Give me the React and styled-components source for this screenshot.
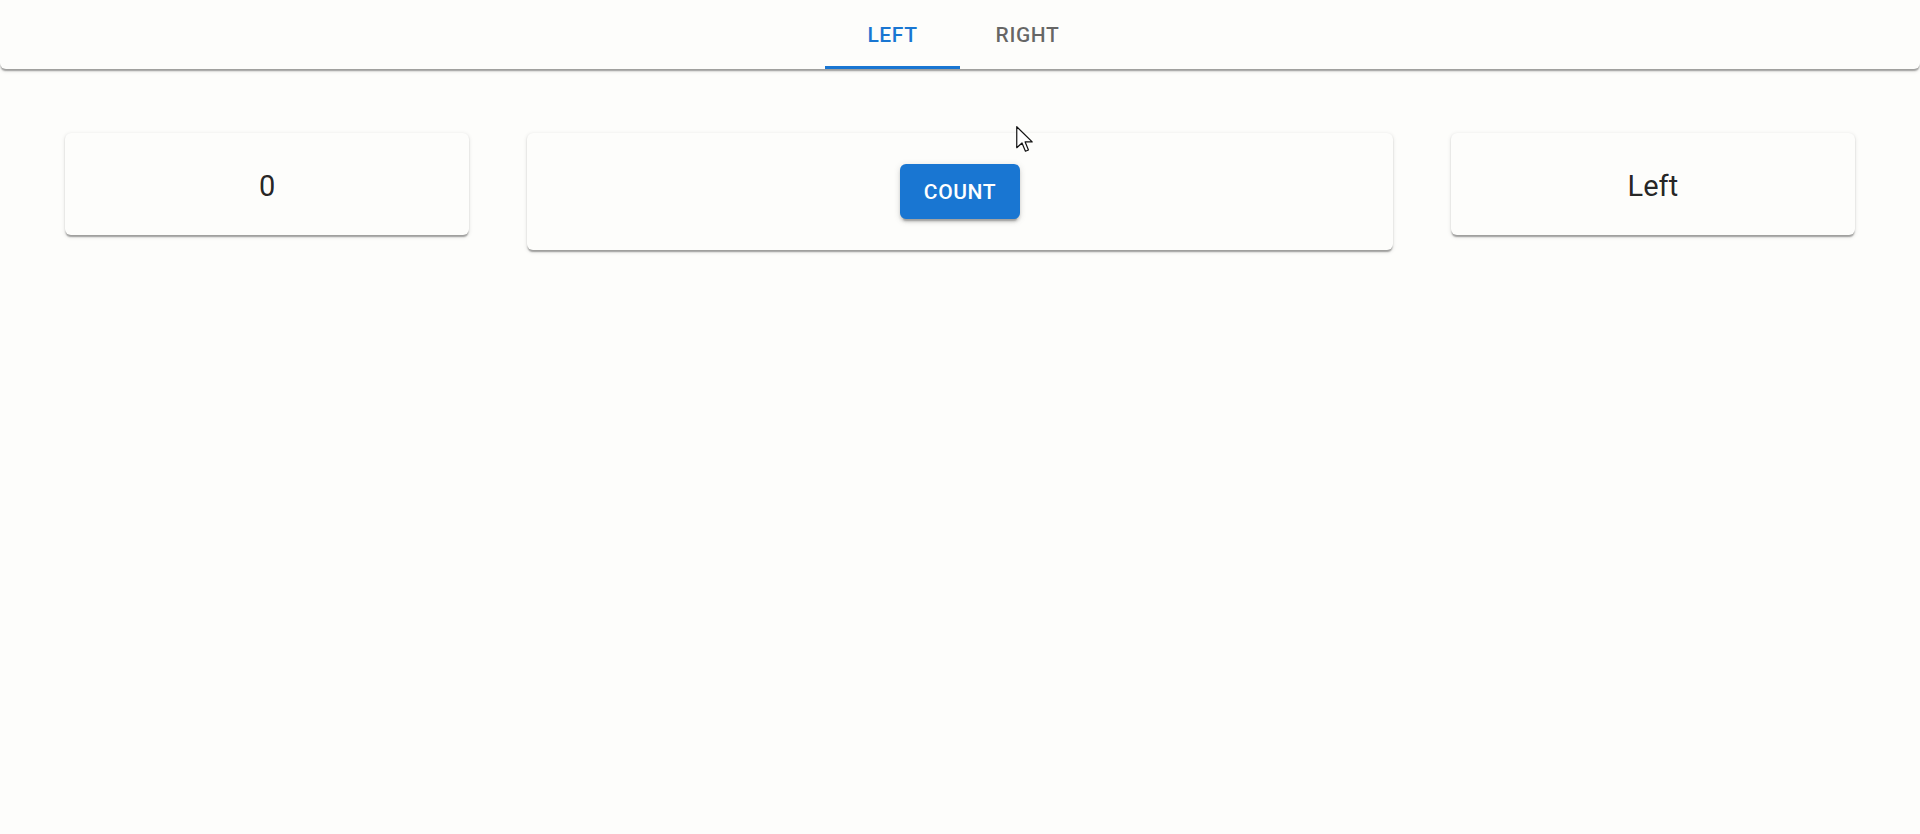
import React, { useState } from "react";
import styled, { createGlobalStyle } from "styled-components";

const GlobalStyle = createGlobalStyle`
  body {
    margin: 0;
    background: #fdfdfb;
    font-family: Roboto, "Liberation Sans", Arial, sans-serif;
    color: rgba(0, 0, 0, 0.87);
  }
`;

const Page = styled.div`
  position: relative;
  min-height: 834px;
`;

const AppBar = styled.header`
  height: 69px;
  display: flex;
  justify-content: center;
  background: #fdfdfb;
  border-radius: 0 0 6px 6px;
  box-shadow: 0 3px 1.5px -1.5px rgba(0, 0, 0, 0.2),
    0 1.5px 1.5px 0 rgba(0, 0, 0, 0.14), 0 1.5px 4.5px 0 rgba(0, 0, 0, 0.12);
`;

const Tab = styled.button`
  min-width: 135px;
  height: 69px;
  padding: 0 24px;
  border: none;
  background: transparent;
  font-family: Roboto, "Liberation Sans", Arial, sans-serif;
  font-size: 21px;
  font-weight: 500;
  letter-spacing: 0.6px;
  text-transform: uppercase;
  cursor: pointer;
  color: ${props => (props.active ? "#1976d2" : "rgba(0, 0, 0, 0.6)")};
  box-shadow: ${props => (props.active ? "inset 0 -3px 0 #1976d2" : "none")};
`;

const Content = styled.main`
  display: grid;
  grid-template-columns: 404fr 865fr 404fr;
  gap: 58px;
  align-items: start;
  padding: 64px 65px 0;
`;

const Card = styled.div`
  background: #fdfdfb;
  border-radius: 6px;
  padding: ${props => props.pad || "26px 24px 22px"};
  display: flex;
  justify-content: center;
  align-items: center;
  box-shadow: 0 3px 1.5px -1.5px rgba(0, 0, 0, 0.2),
    0 1.5px 1.5px 0 rgba(0, 0, 0, 0.14), 0 1.5px 4.5px 0 rgba(0, 0, 0, 0.12);
`;

const Value = styled.div`
  font-size: 29px;
  line-height: 54px;
  font-weight: 400;
  color: rgba(0, 0, 0, 0.87);
`;

const CountButton = styled.button`
  height: 55px;
  min-width: 120px;
  padding: 0 24px;
  border: none;
  border-radius: 6px;
  background: #1976d2;
  color: #fff;
  font-family: Roboto, "Liberation Sans", Arial, sans-serif;
  font-size: 21px;
  font-weight: 500;
  letter-spacing: 0.6px;
  text-transform: uppercase;
  cursor: pointer;
  box-shadow: 0 4.5px 1.5px -3px rgba(0, 0, 0, 0.2),
    0 3px 3px 0 rgba(0, 0, 0, 0.14), 0 1.5px 7.5px 0 rgba(0, 0, 0, 0.12);
`;

const Pointer = styled.svg`
  position: absolute;
  left: 1016px;
  top: 126px;
  pointer-events: none;
`;

const App = () => {
  const [tab, setTab] = useState("left");
  const [count, setCount] = useState(0);

  return (
    <Page>
      <GlobalStyle />
      <AppBar>
        <Tab active={tab === "left"} onClick={() => setTab("left")}>
          Left
        </Tab>
        <Tab active={tab === "right"} onClick={() => setTab("right")}>
          Right
        </Tab>
      </AppBar>
      <Content>
        <Card>
          <Value>{count}</Value>
        </Card>
        <Card pad="31px 24px">
          <CountButton onClick={() => setCount(count + 1)}>Count</CountButton>
        </Card>
        <Card>
          <Value>{tab === "left" ? "Left" : "Right"}</Value>
        </Card>
      </Content>
      <Pointer width="18" height="27" viewBox="0 0 12 18">
        <path
          d="M0.5 0.5 L0.5 14.5 L4 11.3 L6.3 16.8 L8.3 16 L6.1 10.6 L10.8 10.6 Z"
          fill="#fff"
          stroke="#111"
          strokeWidth="0.8"
          strokeLinejoin="round"
        />
      </Pointer>
    </Page>
  );
};

export default App;
